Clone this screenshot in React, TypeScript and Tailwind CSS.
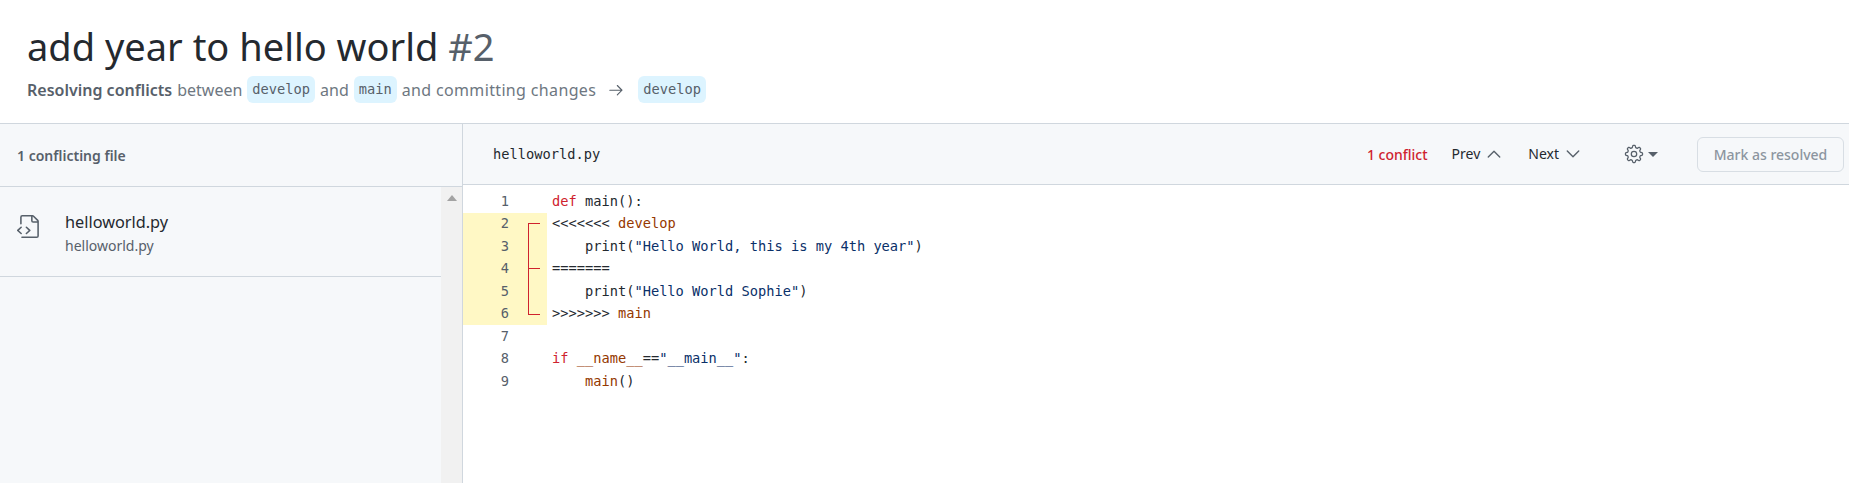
import React from "react";
import { GoFileCode, GoGear, GoChevronUp, GoChevronDown, GoArrowRight } from "react-icons/go";

const sans = "font-['Noto_Sans','Open_Sans',sans-serif]";
const mono = "font-['DejaVu_Sans_Mono','Liberation_Mono',monospace]";

function Pill({ children }: { children: React.ReactNode }) {
  return (
    <span className={`${mono} inline-flex h-[27px] items-center rounded-[6px] bg-[#ddf4ff] px-[5px] text-[13.7px] text-[#57606a]`}>
      {children}
    </span>
  );
}

const K = ({ c }: { c: string }) => <span className="text-[#cf222e]">{c}</span>;
const O = ({ c }: { c: string }) => <span className="text-[#953800]">{c}</span>;
const S = ({ c }: { c: string }) => <span className="text-[#0a3069]">{c}</span>;

const lines: React.ReactNode[] = [
  <><K c="def" /> <span className="text-[#24292f]">main():</span></>,
  <><span className="text-[#24292f]">{"<<<<<<<"}</span> <O c="develop" /></>,
  <><span className="text-[#24292f]">{"    print("}</span><S c={'"Hello World, this is my 4th year"'} /><span className="text-[#24292f]">)</span></>,
  <span className="text-[#24292f]">=======</span>,
  <><span className="text-[#24292f]">{"    print("}</span><S c={'"Hello World Sophie"'} /><span className="text-[#24292f]">)</span></>,
  <><span className="text-[#24292f]">{">>>>>>>"}</span> <O c="main" /></>,
  "",
  <><K c="if" /> <O c="__name__" /><span className="text-[#24292f]">==</span><S c={'"__main__"'} /><span className="text-[#24292f]">:</span></>,
  <><span>{"    "}</span><O c="main" /><span className="text-[#24292f]">()</span></>,
];

export default function App() {
  return (
    <div className={`${sans} flex h-[483px] flex-col overflow-hidden bg-white`}>
      <header className="h-[124px] shrink-0 border-b border-[#d0d7de] pl-[27px] pt-[20px]">
        <h1 className="text-[38px] leading-[52px] font-normal text-[#24292f]">
          add year to hello world <span className="text-[#57606a]">#2</span>
        </h1>
        <p className="mt-[4px] flex h-[27px] items-center gap-[5px] text-[16px] text-[#6e7781]">
          <span className="font-semibold text-[#57606a]">Resolving conflicts</span>
          <span>between</span>
          <Pill>develop</Pill>
          <span>and</span>
          <Pill>main</Pill>
          <span className="tracking-[0.35px]">and committing changes</span>
          <GoArrowRight className="ml-[6px] mr-[8px] h-[18px] w-[18px] text-[#57606a]" />
          <Pill>develop</Pill>
        </p>
      </header>
      <div className="flex min-h-0 flex-1">
        <aside className="flex w-[463px] shrink-0 flex-col border-r border-[#d0d7de] bg-[#f6f8fa]">
          <div className="flex h-[63px] shrink-0 items-center border-b border-[#d0d7de] pl-[17px] text-[14px] font-semibold text-[#57606a]">
            1 conflicting file
          </div>
          <div className="flex min-h-0 flex-1">
            <div className="min-w-0 flex-1">
              <div className="flex h-[90px] border-b border-[#d0d7de]">
                <GoFileCode className="ml-[17px] mt-[27px] h-[25px] w-[25px] text-[#57606a]" />
                <div className="ml-[23px] pt-[23px]">
                  <div className="text-[16.3px] leading-[24px] text-[#24292f]">helloworld.py</div>
                  <div className="text-[14px] leading-[24px] text-[#57606a]">helloworld.py</div>
                </div>
              </div>
            </div>
            <div className="flex w-[21px] shrink-0 justify-center bg-[#f1f1f1] pt-[8px]">
              <div className="h-0 w-0 border-x-[5px] border-b-[6px] border-x-transparent border-b-[#a3a3a3]" />
            </div>
          </div>
        </aside>
        <main className="flex min-w-0 flex-1 flex-col">
          <div className="flex h-[61px] shrink-0 items-center border-b border-[#d0d7de] bg-[#f6f8fa] pl-[30px] pr-[5px]">
            <span className={`${mono} text-[13.7px] text-[#24292f]`}>helloworld.py</span>
            <span className="ml-auto text-[14px] font-medium text-[#cf222e]">1 conflict</span>
            <span className="ml-[24px] flex items-center text-[14px] text-[#24292f]">
              <span className="-translate-y-[1px]">Prev</span><GoChevronUp className="ml-[3px] h-[22px] w-[22px] text-[#57606a]" />
            </span>
            <span className="ml-[23px] flex items-center text-[14px] text-[#24292f]">
              <span className="-translate-y-[1px]">Next</span><GoChevronDown className="ml-[3px] h-[22px] w-[22px] text-[#57606a]" />
            </span>
            <span className="ml-[40px] flex items-center text-[#57606a]">
              <GoGear className="h-[20px] w-[20px]" />
              <span className="ml-[4px] h-0 w-0 border-x-[5px] border-t-[5px] border-x-transparent border-t-[#57606a]" />
            </span>
            <button className="ml-[39px] h-[35px] w-[147px] rounded-[6px] border border-[#d8dee4] bg-[#f6f8fa] text-[14px] font-medium text-[#8c959f]">
              Mark as resolved
            </button>
          </div>
          <div className="pt-[5px]">
            {lines.map((l, i) => {
              const n = i + 1;
              const conflict = n >= 2 && n <= 6;
              return (
                <div key={n} className="flex h-[22.5px] items-center">
                  <div className={`relative flex h-full w-[84px] shrink-0 items-center justify-end pr-[38px] ${conflict ? "bg-[#fff8c5]" : ""}`}>
                    <span className={`${mono} text-[13.7px] text-[#57606a]`}>{n}</span>
                    {n === 2 && <span className="absolute bottom-0 left-[65px] top-[10px] w-[12px] border-l border-t border-[#cf222e]" />}
                    {(n === 3 || n === 5) && <span className="absolute bottom-0 left-[65px] top-0 border-l border-[#cf222e]" />}
                    {n === 4 && <><span className="absolute bottom-0 left-[65px] top-0 border-l border-[#cf222e]" /><span className="absolute left-[65px] top-[10px] w-[12px] border-t border-[#cf222e]" /></>}
                    {n === 6 && <span className="absolute left-[65px] top-0 h-[12px] w-[12px] border-b border-l border-[#cf222e]" />}
                  </div>
                  <pre className={`${mono} pl-[5px] text-[13.7px] text-[#24292f]`}>{l}</pre>
                </div>
              );
            })}
          </div>
        </main>
      </div>
    </div>
  );
}
